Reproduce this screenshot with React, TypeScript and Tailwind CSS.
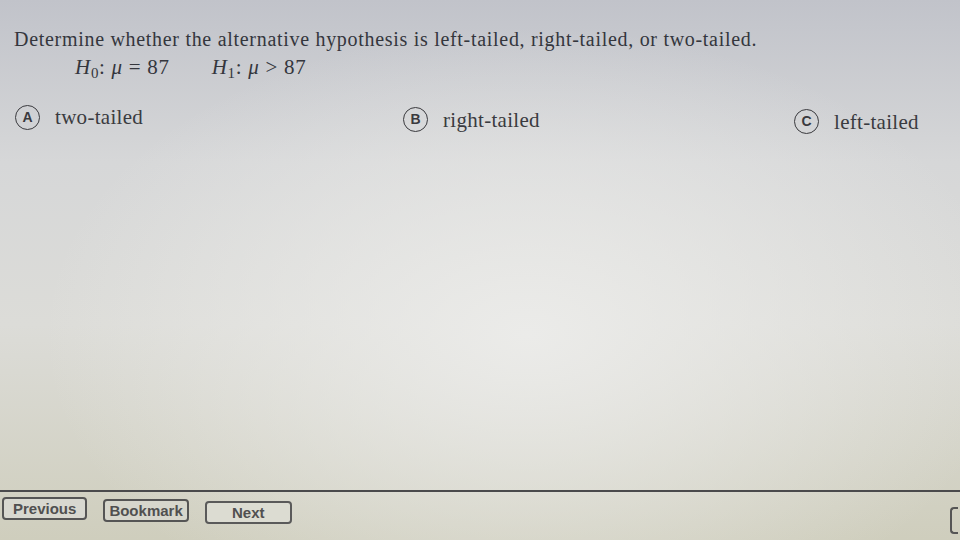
import React from 'react';

const options = [
  { key: 'A', label: 'two-tailed', box: 'w-[388px] mt-0' },
  { key: 'B', label: 'right-tailed', box: 'w-[391px] mt-[5px]' },
  { key: 'C', label: 'left-tailed', box: 'w-[140px] mt-[9px]' },
];

const OptionBadge: React.FC<{ letter: string }> = ({ letter }) => (
  <span className="flex h-[25px] w-[25px] shrink-0 items-center justify-center rounded-full border-[1.5px] border-[#3a3a3e] text-[14px] font-bold text-[#3a3a3e] font-['Liberation_Sans',sans-serif]">
    {letter}
  </span>
);

const App: React.FC = () => {
  return (
    <div className="flex h-[540px] w-[960px] flex-col overflow-hidden bg-[radial-gradient(ellipse_at_55%_62%,rgba(236,236,234,0.95),rgba(236,236,234,0)_65%),linear-gradient(to_bottom,#c1c3ca,#d6d7d8_30%,#dcdcd8_60%,#cfcebd)] font-['Liberation_Serif',serif] text-[#34363d]">
      {/* Question */}
      <div className="flex-1 px-[14px] pt-[27px]">
        <p className="text-[20px] leading-[24px] tracking-[0.7px]">
          Determine whether the alternative hypothesis is left-tailed, right-tailed, or two-tailed.
        </p>
        <div className="mt-[4px] flex items-baseline gap-[42px] pl-[61px] text-[21px] leading-[24px] tracking-[0.7px]">
          <span>
            <i>H</i>
            <sub className="text-[15px]">0</sub>: <i>μ</i> = 87
          </span>
          <span>
            <i>H</i>
            <sub className="text-[15px]">1</sub>: <i>μ</i> &gt; 87
          </span>
        </div>

        {/* Answer choices */}
        <div className="mt-[21px] flex pl-[1px]">
          {options.map((opt) => (
            <div key={opt.key} className={`flex shrink-0 items-center gap-[15px] ${opt.box}`}>
              <OptionBadge letter={opt.key} />
              <span className="text-[21px] leading-[24px] tracking-[0.3px] text-[#3a3b40]">{opt.label}</span>
            </div>
          ))}
        </div>
      </div>

      {/* Footer navigation */}
      <div className="h-[50px] border-t-2 border-[#4a4a4c]">
        <div className="flex items-start gap-[16px] px-[2px] pt-[5px] font-['Liberation_Sans',sans-serif] text-[15px] font-bold text-[#505050]">
          <button className="h-[23px] rounded-[4px] border-2 border-[#555555] bg-[#d8d8d0] px-[9px] leading-[18px]">
            Previous
          </button>
          <button className="mt-[2px] h-[23px] rounded-[4px] border-2 border-[#555555] bg-[#d6d6cc] px-[4px] leading-[18px]">
            Bookmark
          </button>
          <button className="mt-[4px] h-[23px] w-[87px] rounded-[4px] border-2 border-[#5a5a5a] bg-[#dcdcd2] leading-[18px]">
            Next
          </button>
          <div className="ml-auto mt-[10px] h-[27px] w-[8px] rounded-l-[4px] border-y-2 border-l-2 border-[#555555]" />
        </div>
      </div>
    </div>
  );
};

export default App;
